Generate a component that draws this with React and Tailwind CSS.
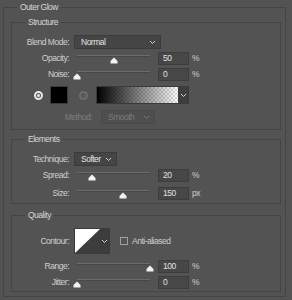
import React from 'react';

const Chevron = ({ color = '#d0d0d0' }) => (
  <svg width="7" height="5" viewBox="0 0 7 5" className="shrink-0">
    <polyline points="1,1 3.5,3.5 6,1" fill="none" stroke={color} strokeWidth="1" />
  </svg>
);

const Thumb = () => (
  <svg width="8" height="7" viewBox="0 0 8 7">
    <path d="M4 0.5 L7.5 4 L7.5 6.5 L0.5 6.5 L0.5 4 Z" fill="#f2f2f2" />
  </svg>
);

function Slider({ pct }) {
  return (
    <div className="relative w-[81px] h-[14px] shrink-0">
      <div className="absolute left-[4px] right-[4px] top-[4px] h-[2px] bg-[#6c6c6c] border-b border-[#474747]" />
      <div className="absolute top-[6px]" style={{ left: `${pct * 73}px` }}>
        <Thumb />
      </div>
    </div>
  );
}

function SliderRow({ label, pct, value, unit, className = '' }) {
  return (
    <div className={`flex items-center h-[14px] ${className}`}>
      <div className="w-[57px] text-right text-[#cfcfcf] mr-[4px]">{label}</div>
      <Slider pct={pct} />
      <div className="ml-[4px] w-[31px] h-[13px] bg-[#474747] border border-[#3d3d3d] text-[#e0e0e0] pl-[4px] leading-[11px]">
        {value}
      </div>
      <div className="ml-[3px] text-[#cfcfcf]">{unit}</div>
    </div>
  );
}

function Dropdown({ text, width, dim = false }) {
  return (
    <div
      className={`${width} h-[14px] flex items-center justify-between pl-[6px] pr-[4px] border ${
        dim ? 'bg-[#4e4e4e] border-[#4a4a4a] text-[#7c7c7c]' : 'bg-[#454545] border-[#3b3b3b] text-[#e2e2e2]'
      }`}
    >
      <span>{text}</span>
      <Chevron color={dim ? '#7a7a7a' : '#d0d0d0'} />
    </div>
  );
}

function Group({ title, className = '', children }) {
  return (
    <fieldset className={`ml-[7px] w-[270px] border border-[#454545] ${className}`}>
      <legend className="ml-[13px] px-[3px] leading-[12px] text-[#d6d6d6]">{title}</legend>
      {children}
    </fieldset>
  );
}

export default function App() {
  return (
    <div className="w-[292px] h-[300px] bg-[#535353] pt-px overflow-hidden font-['Liberation_Sans',Arial,sans-serif] text-[8.5px] tracking-[-0.5px]">
      <fieldset className="ml-[3px] w-[283px] border border-[#454545] pb-[4px]">
        <legend className="ml-[13px] px-[3px] leading-[12px] text-[#d6d6d6]">Outer Glow</legend>

        <Group title="Structure" className="mt-[3px] pb-[5px]">
          <div className="flex items-center h-[14px] mt-[7px]">
            <div className="w-[57px] text-right text-[#cfcfcf] mr-[5px]">Blend Mode:</div>
            <Dropdown text="Normal" width="w-[87px]" />
          </div>
          <SliderRow label="Opacity:" pct={0.5} value="50" unit="%" className="mt-[2px]" />
          <SliderRow label="Noise:" pct={0} value="0" unit="%" className="mt-[2px]" />

          <div className="flex items-center h-[18px] mt-[5px]">
            <div className="ml-[22px] w-[9px] h-[9px] rounded-full border-2 border-[#e8e8e8] flex items-center justify-center">
              <div className="w-[3px] h-[3px] rounded-full bg-[#e8e8e8]" />
            </div>
            <div className="ml-[7px] w-[18px] h-[18px] bg-black border border-[#3a3a3a]" />
            <div className="ml-[11px] w-[9px] h-[9px] rounded-full border-2 border-[#6e6e6e] flex items-center justify-center">
              <div className="w-[3px] h-[3px] rounded-full bg-[#5f5f5f]" />
            </div>
            <div className="ml-[8px] flex h-[18px] border border-[#3a3a3a]">
              <div className="relative w-[81px] h-full bg-[repeating-conic-gradient(#ffffff_0_25%,#d9d9d9_0_50%)] bg-[length:4px_4px]">
                <div className="absolute inset-0 bg-gradient-to-r from-black to-transparent" />
              </div>
              <div className="w-[10px] h-full bg-[#3e3e3e] flex items-center justify-center">
                <Chevron />
              </div>
            </div>
          </div>

          <div className="flex items-center h-[14px] mt-[6px]">
            <div className="w-[80px] text-right text-[#7e7e7e] mr-[9px]">Method:</div>
            <Dropdown text="Smooth" width="w-[54px]" dim />
          </div>
        </Group>

        <Group title="Elements" className="mt-[3px] pb-[3px]">
          <div className="flex items-center h-[14px] mt-[7px]">
            <div className="w-[57px] text-right text-[#cfcfcf] mr-[5px]">Technique:</div>
            <Dropdown text="Softer" width="w-[43px]" />
          </div>
          <SliderRow label="Spread:" pct={0.2} value="20" unit="%" className="mt-[2px]" />
          <SliderRow label="Size:" pct={0.63} value="150" unit="px" className="mt-[4px]" />
        </Group>

        <Group title="Quality" className="mt-[5px] pb-[2px]">
          <div className="flex items-center h-[26px] mt-[7px]">
            <div className="w-[57px] text-right text-[#cfcfcf] mr-[5px]">Contour:</div>
            <div className="flex h-[26px] border border-[#3a3a3a]">
              <svg width="25" height="24" viewBox="0 0 25 24" className="block">
                <rect width="25" height="24" fill="#ffffff" />
                <polygon points="0,24 25,0 25,24" fill="#3d3d3d" />
              </svg>
              <div className="w-[9px] h-full bg-[#3c3c3c] flex items-center justify-center">
                <Chevron />
              </div>
            </div>
            <div className="ml-[10px] w-[8px] h-[8px] border border-[#a0a0a0]" />
            <div className="ml-[4px] text-[#cfcfcf]">Anti-aliased</div>
          </div>
          <SliderRow label="Range:" pct={1} value="100" unit="%" className="mt-[5px]" />
          <SliderRow label="Jitter:" pct={0} value="0" unit="%" className="mt-[2px]" />
        </Group>
      </fieldset>
    </div>
  );
}
